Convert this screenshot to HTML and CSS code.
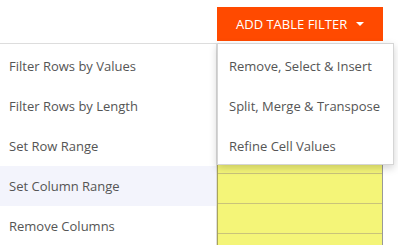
FILE: index.html
```html
<!DOCTYPE html>
<html>
<head>
<meta charset="utf-8">
<link rel="stylesheet" href="styles.css">
</head>
<body>
<div class="page">
  <div class="toolbar">
    <button class="add-btn">ADD TABLE FILTER<span class="caret"></span></button>
  </div>
  <div class="sheet">
    <div class="row"></div>
    <div class="row"></div>
    <div class="row"></div>
    <div class="row"></div>
    <div class="row"></div>
    <div class="row"></div>
    <div class="row last"></div>
  </div>
  <ul class="menu main-menu">
    <li class="item">Filter Rows by Values</li>
    <li class="item">Filter Rows by Length</li>
    <li class="item">Set Row Range</li>
    <li class="item active">Set Column Range</li>
    <li class="item">Remove Columns</li>
  </ul>
  <ul class="menu sub-menu">
    <li class="item">Remove, Select &amp; Insert</li>
    <li class="item">Split, Merge &amp; Transpose</li>
    <li class="item">Refine Cell Values</li>
  </ul>
</div>
</body>
</html>
```

FILE: styles.css
```css
html, body {
  margin: 0;
  padding: 0;
  background: #ffffff;
  font-family: "Open Sans", "Noto Sans", sans-serif;
  overflow: hidden;
}
.page {
  position: relative;
  width: 398px;
  height: 245px;
  overflow: hidden;
}
.toolbar {
  height: 43px;
  padding-top: 7px;
  box-sizing: border-box;
  padding-left: 217px;
}
.add-btn {
  display: flex;
  align-items: center;
  width: 166px;
  height: 34px;
  border: 0;
  margin: 0;
  padding: 0 0 0 19px;
  background: #ff4a00;
  color: #ffffff;
  font-family: "Open Sans", "Noto Sans", sans-serif;
  font-size: 13px;
  box-sizing: border-box;
}
.caret {
  display: inline-block;
  margin-left: 9px;
  width: 0;
  height: 0;
  border-left: 4px solid transparent;
  border-right: 4px solid transparent;
  border-top: 4px solid #ffffff;
}
.sheet {
  margin-top: 11px;
  margin-left: 217px;
  width: 166px;
  height: 191px;
  background: #f4f578;
  border-left: 1px solid #a9a45a;
  border-right: 1px solid #999999;
  box-sizing: border-box;
}
.row {
  height: 30px;
  border-bottom: 1px solid #c9c37a;
  box-sizing: border-box;
}
.row.last {
  height: 11px;
  border-bottom: 0;
}
.menu {
  position: absolute;
  top: 43px;
  margin: 0;
  padding: 2px 0 0;
  list-style: none;
  background: #ffffff;
  box-sizing: border-box;
}
.main-menu {
  left: -1px;
  width: 218px;
  height: 202px;
  border: 1px solid #dddddd;
  border-bottom: 0;
}
.sub-menu {
  left: 217px;
  width: 177px;
  height: 122px;
  border: 1px solid #d5d5d5;
  box-shadow: 0 3px 8px rgba(0, 0, 0, 0.18);
}
.item {
  height: 40px;
  line-height: 40px;
  padding-left: 9px;
  font-size: 13px;
  color: #555555;
  white-space: nowrap;
}
.sub-menu .item {
  padding-left: 11px;
}
.item.active {
  background: #f3f4fc;
}
```
